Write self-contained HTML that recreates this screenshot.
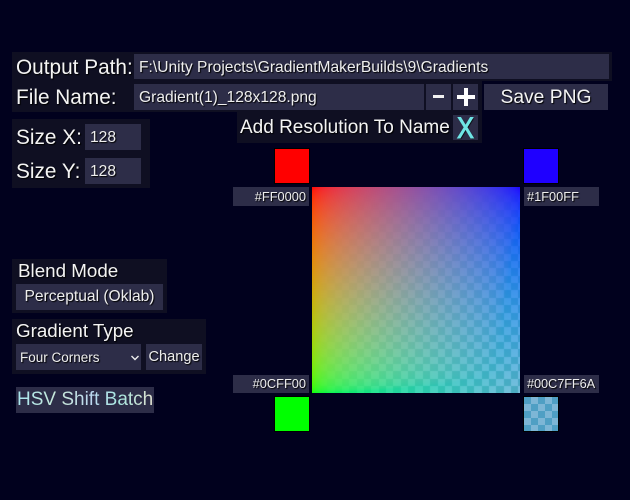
<!DOCTYPE html>
<html><head><meta charset="utf-8">
<style>
html,body{margin:0;padding:0}
body{width:630px;height:500px;overflow:hidden;background:#01011e;position:relative;font-family:"Liberation Sans",sans-serif;color:#f4f4f4}
.p{position:absolute;background:#0f0f22}
.b{position:absolute;background:#2d2d48;box-sizing:border-box;white-space:nowrap}
.t{position:absolute;white-space:nowrap;text-shadow:1px 1px 1px #000}
.l{font-size:20.8px;line-height:26px}
.s{font-size:15.6px;line-height:26px;color:#eee}
.h{font-size:12.8px;line-height:18px;color:#eee}
.sw{position:absolute;width:34px;height:34px;outline:1px solid #000}
.chk{background-color:#4f9fc4;background-image:conic-gradient(#7db6d6 25%,#4f9fc4 0 50%,#7db6d6 0 75%,#4f9fc4 0);background-size:14px 14px}
</style></head><body>
<div class="p" style="left:12px;top:52px;width:600px;height:29px"></div>
<div class="p" style="left:12px;top:81px;width:470px;height:31px"></div>
<div class="p" style="left:237px;top:112px;width:245px;height:31px"></div>
<div class="p" style="left:12px;top:119px;width:138px;height:69px"></div>
<div class="p" style="left:12px;top:259px;width:155px;height:54px"></div>
<div class="p" style="left:12px;top:319px;width:194px;height:55px"></div>

<div class="t l" style="left:16px;top:55px">Output Path:</div>
<div class="b" style="left:134px;top:54px;width:475px;height:25px"></div>
<div class="t s" style="left:139px;top:55px;line-height:25px">F:\Unity Projects\GradientMakerBuilds\9\Gradients</div>

<div class="t l" style="left:16px;top:85px">File Name:</div>
<div class="b" style="left:134px;top:84px;width:290px;height:26px"></div>
<div class="t s" style="left:139px;top:85px">Gradient(1)_128x128.png</div>
<div class="b" style="left:426px;top:84px;width:25px;height:26px"></div>
<div class="b" style="left:453px;top:84px;width:25px;height:26px"></div>
<div class="t" style="left:433px;top:95px;width:11px;height:3px;background:#f0f0f0"></div>
<div class="t" style="left:457px;top:95px;width:18px;height:4px;background:#fff"></div>
<div class="t" style="left:464px;top:88px;width:4px;height:18px;background:#fff"></div>
<div class="b" style="left:484px;top:84px;width:124px;height:26px"></div>
<div class="t" style="left:484px;top:85px;width:124px;text-align:center;font-size:19.3px;line-height:26px">Save PNG</div>

<div class="t" style="left:240px;top:115px;font-size:19px;line-height:26px">Add Resolution To Name</div>
<div class="b" style="left:453px;top:115px;width:25px;height:25px"></div>
<div class="t" style="left:453px;top:116px;width:25px;text-align:center;font-size:30px;line-height:25px;color:#6fe6e6;-webkit-text-stroke:1px #6fe6e6;transform:scaleX(.85)">X</div>

<div class="t l" style="left:16px;top:125px">Size X:</div>
<div class="b" style="left:85px;top:124px;width:56px;height:26px"></div>
<div class="t s" style="left:90px;top:125px">128</div>
<div class="t l" style="left:16px;top:159px">Size Y:</div>
<div class="b" style="left:85px;top:158px;width:56px;height:26px"></div>
<div class="t s" style="left:90px;top:159px">128</div>

<div class="sw" style="left:275px;top:149px;background:#f00"></div>
<div class="sw" style="left:524px;top:149px;background:#1f00ff"></div>
<div class="sw" style="left:275px;top:397px;background:#0f0"></div>
<div class="sw chk" style="left:524px;top:397px"></div>

<div class="b" style="left:233px;top:187px;width:76px;height:19px"></div>
<div class="t h" style="left:233px;top:188px;width:73px;text-align:right">#FF0000</div>
<div class="b" style="left:524px;top:187px;width:75px;height:19px"></div>
<div class="t h" style="left:527px;top:188px">#1F00FF</div>
<div class="b" style="left:233px;top:375px;width:76px;height:18px"></div>
<div class="t h" style="left:233px;top:375px;width:73px;text-align:right">#0CFF00</div>
<div class="b" style="left:524px;top:375px;width:75px;height:18px"></div>
<div class="t h" style="left:527px;top:375px;letter-spacing:-.1px">#00C7FF6A</div>

<canvas id="g" width="208" height="206" style="position:absolute;left:312px;top:187px;width:208px;height:206px;background:linear-gradient(135deg,#f22,#7a8f9a 50%,#5ab)"></canvas>

<div class="t" style="left:18px;top:259px;font-size:18.8px;line-height:24px">Blend Mode</div>
<div class="b" style="left:16px;top:284px;width:147px;height:26px"></div>
<div class="t s" style="left:16px;top:284px;width:147px;text-align:center">Perceptual (Oklab)</div>

<div class="t" style="left:16px;top:319px;font-size:18.8px;line-height:24px">Gradient Type</div>
<div class="b" style="left:16px;top:344px;width:125px;height:26px"></div>
<div class="t" style="left:20px;top:344px;font-size:13.5px;line-height:27px;color:#eee">Four Corners</div>
<svg style="position:absolute;left:130px;top:354px" width="10" height="8" viewBox="0 0 10 8"><path d="M1.5 2 L5 5.5 L8.5 2" fill="none" stroke="#eee" stroke-width="1.4"/></svg>
<div class="b" style="left:146px;top:344px;width:56px;height:26px"></div>
<div class="t" style="left:146px;top:344px;width:56px;text-align:center;font-size:14.6px;line-height:26px;color:#eee">Change</div>

<div class="b" style="left:16px;top:387px;width:138px;height:26px"></div>
<div class="t" style="left:17px;top:387px;font-size:19px;line-height:26px;text-shadow:none;background:linear-gradient(90deg,#a8e6f0,#c8e8d8 30%,#bcd8f0 55%,#a8e8e0 75%,#e0e0d0);-webkit-background-clip:text;background-clip:text;color:transparent">HSV Shift Batch</div>

<script>
(function(){
function s2l(c){c/=255;return c<=.04045?c/12.92:Math.pow((c+.055)/1.055,2.4)}
function l2s(c){c=c<=0?0:c>=1?1:c;return 255*(c<=.0031308?c*12.92:1.055*Math.pow(c,1/2.4)-.055)}
function ok(h){var r=s2l(h[0]),g=s2l(h[1]),b=s2l(h[2]);
var l=Math.cbrt(.4122214708*r+.5363325363*g+.0514459929*b),m=Math.cbrt(.2119034982*r+.6806995451*g+.1073969566*b),s=Math.cbrt(.0883024619*r+.2817188376*g+.6299787005*b);
return[.2104542553*l+.793617785*m-.0040720468*s,1.9779984951*l-2.428592205*m+.4505937099*s,.0259040371*l+.7827717662*m-.808675766*s]}
function rgb(L){var l=Math.pow(L[0]+.3963377774*L[1]+.2158037573*L[2],3),m=Math.pow(L[0]-.1055613458*L[1]-.0638541728*L[2],3),s=Math.pow(L[0]-.0894841775*L[1]-1.291485548*L[2],3);
return[l2s(4.0767416621*l-3.3077115913*m+.2309699292*s),l2s(-1.2684380046*l+2.6097574011*m-.3413193965*s),l2s(-.0041960863*l-.7034186147*m+1.707614701*s)]}
var TL=ok([255,0,0]),TR=ok([31,0,255]),BL=ok([12,255,0]),BR=ok([0,199,255]);
var cv=document.getElementById('g'),x=cv.getContext('2d'),W=cv.width,H=cv.height,im=x.createImageData(W,H),d=im.data,cell=206/28;
var dk=[135,150,150],lt=[205,185,195];
for(var j=0;j<H;j++)for(var i=0;i<W;i++){
var u=(i+.5)/W,v=(j+.5)/H,c=[0,0,0];
for(var k=0;k<3;k++)c[k]=(1-v)*((1-u)*TL[k]+u*TR[k])+v*((1-u)*BL[k]+u*BR[k]);
var a=1-.584*Math.pow(u*v,.9),C=rgb(c);
var ch=((Math.floor(i/cell)+Math.floor(j/cell))%2==0)?dk:lt;
var p=(j*W+i)*4;
for(k=0;k<3;k++)d[p+k]=C[k]*a+ch[k]*(1-a);
d[p+3]=255}
x.putImageData(im,0,0);
})();
</script>
</body></html>
